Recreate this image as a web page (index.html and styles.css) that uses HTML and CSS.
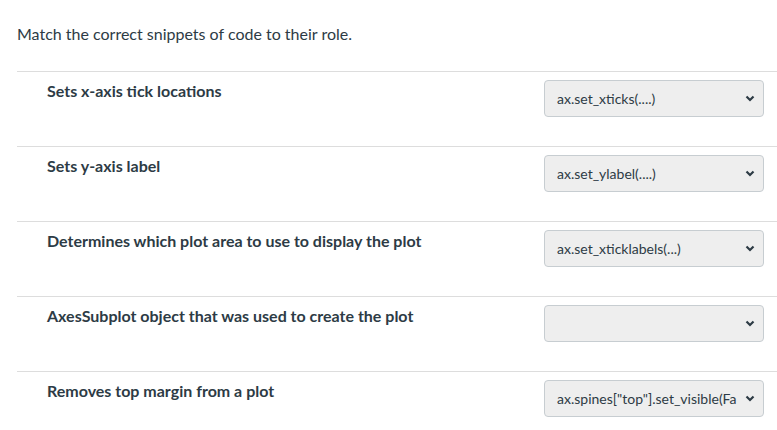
FILE: index.html
```html
<!DOCTYPE html>
<html>
<head>
<meta charset="utf-8">
<link rel="stylesheet" href="styles.css">
</head>
<body>
<div class="question">
  <p class="intro">Match the correct snippets of code to their role.</p>
  <div class="rows">
    <div class="row">
      <div class="label">Sets x-axis tick locations</div>
      <div class="select"><span class="value">ax.set_xticks(....)</span><svg class="chev" width="10" height="7" viewBox="0 0 10 7"><path d="M1.5 1.5 L5 5 L8.5 1.5" fill="none" stroke="#2d3b45" stroke-width="2.2"/></svg></div>
    </div>
    <div class="row">
      <div class="label">Sets y-axis label</div>
      <div class="select"><span class="value">ax.set_ylabel(....)</span><svg class="chev" width="10" height="7" viewBox="0 0 10 7"><path d="M1.5 1.5 L5 5 L8.5 1.5" fill="none" stroke="#2d3b45" stroke-width="2.2"/></svg></div>
    </div>
    <div class="row">
      <div class="label">Determines which plot area to use to display the plot</div>
      <div class="select"><span class="value">ax.set_xticklabels(...)</span><svg class="chev" width="10" height="7" viewBox="0 0 10 7"><path d="M1.5 1.5 L5 5 L8.5 1.5" fill="none" stroke="#2d3b45" stroke-width="2.2"/></svg></div>
    </div>
    <div class="row">
      <div class="label">AxesSubplot object that was used to create the plot</div>
      <div class="select"><span class="value"></span><svg class="chev" width="10" height="7" viewBox="0 0 10 7"><path d="M1.5 1.5 L5 5 L8.5 1.5" fill="none" stroke="#2d3b45" stroke-width="2.2"/></svg></div>
    </div>
    <div class="row">
      <div class="label">Removes top margin from a plot</div>
      <div class="select"><span class="value">ax.spines["top"].set_visible(Fa</span><svg class="chev" width="10" height="7" viewBox="0 0 10 7"><path d="M1.5 1.5 L5 5 L8.5 1.5" fill="none" stroke="#2d3b45" stroke-width="2.2"/></svg></div>
    </div>
  </div>
</div>
</body>
</html>
```
FILE: styles.css
```css
html, body {
  margin: 0;
  background: #fff;
}
body {
  font-family: Lato, "Open Sans", sans-serif;
  color: #2d3b45;
}
.question {
  padding-left: 17px;
}
.intro {
  margin: 0;
  padding-top: 24px;
  height: 71px;
  box-sizing: border-box;
  font-size: 16px;
  line-height: 20px;
}
.row {
  border-top: 1px solid #dddddd;
  height: 75px;
  box-sizing: border-box;
  display: flex;
  justify-content: space-between;
  align-items: flex-start;
  padding: 0 13px 0 30px;
}
.label {
  font-weight: bold;
  font-size: 16px;
  line-height: 20px;
  padding-top: 9px;
}
.select {
  margin-top: 8px;
  width: 220px;
  height: 37px;
  box-sizing: border-box;
  background: #eeeeee;
  border: 1px solid #c7cdd1;
  border-radius: 4px;
  display: flex;
  align-items: center;
  padding: 0 8px 0 12px;
  font-size: 14px;
  overflow: hidden;
}
.value {
  flex: 1;
  white-space: nowrap;
  overflow: hidden;
}
.chev {
  flex: none;
  margin-left: 6px;
}
```
